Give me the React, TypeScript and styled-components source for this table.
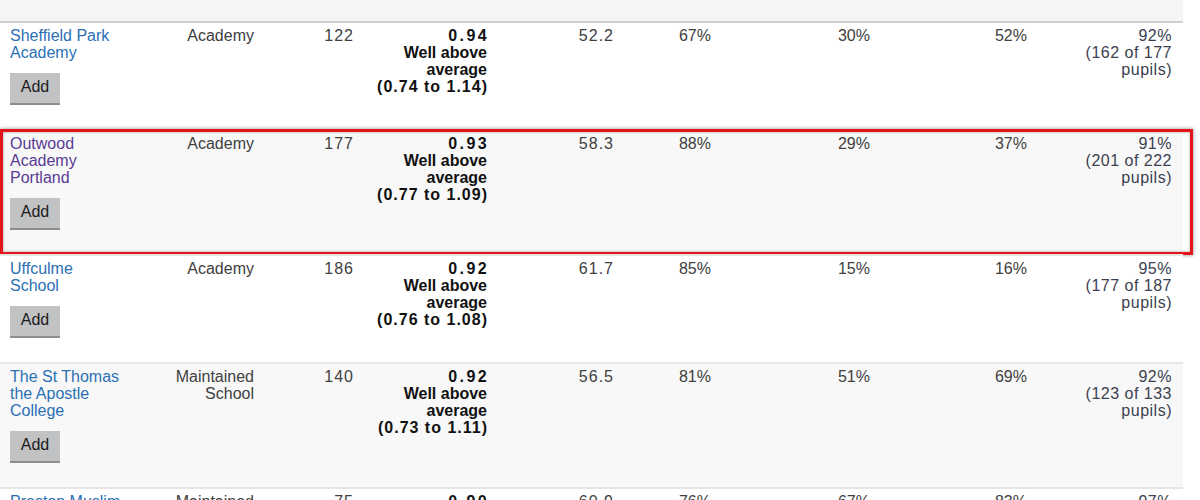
import styled, { createGlobalStyle } from 'styled-components';

type School = {
  name: string;
  visited?: boolean;
  type: string[];
  pupils: string;
  score: string;
  band: string[];
  range: string;
  att8: string;
  col6: string;
  col7: string;
  col8: string;
  pct: string;
  ofPupils: string;
  highlight?: boolean;
};

const schools: School[] = [
  {
    name: 'Sheffield Park Academy',
    type: ['Academy'],
    pupils: '122',
    score: '0.94',
    band: ['Well above', 'average'],
    range: '(0.74 to 1.14)',
    att8: '52.2',
    col6: '67%',
    col7: '30%',
    col8: '52%',
    pct: '92%',
    ofPupils: '162 of 177',
  },
  {
    name: 'Outwood Academy Portland',
    visited: true,
    type: ['Academy'],
    pupils: '177',
    score: '0.93',
    band: ['Well above', 'average'],
    range: '(0.77 to 1.09)',
    att8: '58.3',
    col6: '88%',
    col7: '29%',
    col8: '37%',
    pct: '91%',
    ofPupils: '201 of 222',
    highlight: true,
  },
  {
    name: 'Uffculme School',
    type: ['Academy'],
    pupils: '186',
    score: '0.92',
    band: ['Well above', 'average'],
    range: '(0.76 to 1.08)',
    att8: '61.7',
    col6: '85%',
    col7: '15%',
    col8: '16%',
    pct: '95%',
    ofPupils: '177 of 187',
  },
  {
    name: 'The St Thomas the Apostle College',
    type: ['Maintained', 'School'],
    pupils: '140',
    score: '0.92',
    band: ['Well above', 'average'],
    range: '(0.73 to 1.11)',
    att8: '56.5',
    col6: '81%',
    col7: '51%',
    col8: '69%',
    pct: '92%',
    ofPupils: '123 of 133',
  },
  {
    name: 'Preston Muslim Girls High School',
    type: ['Maintained', 'School'],
    pupils: '75',
    score: '0.90',
    band: ['Well above', 'average'],
    range: '(0.70 to 1.10)',
    att8: '60.9',
    col6: '76%',
    col7: '67%',
    col8: '83%',
    pct: '97%',
    ofPupils: '73 of 75',
  },
];

function App() {
  return (
    <>
      <GlobalStyle />
      <Table>
        <HeadStrip />
        {schools.map((s, i) => (
          <Row key={s.name} $alt={i % 2 === 1} $highlight={s.highlight}>
            <NameCell>
              <SchoolLink href='#' $visited={s.visited}>
                {s.name}
              </SchoolLink>
              <AddButton>Add</AddButton>
            </NameCell>
            <Cell>
              {s.type.map((t) => (
                <div key={t}>{t}</div>
              ))}
            </Cell>
            <Cell $num>{s.pupils}</Cell>
            <ScoreCell>
              <Score>{s.score}</Score>
              {s.band.map((b) => (
                <div key={b}>{b}</div>
              ))}
              <Range>{s.range}</Range>
            </ScoreCell>
            <Cell $num>{s.att8}</Cell>
            <Cell>{s.col6}</Cell>
            <Cell>{s.col7}</Cell>
            <Cell>{s.col8}</Cell>
            <PupilsCell>
              <div>{s.pct}</div>
              <div>({s.ofPupils}</div>
              <div>pupils)</div>
            </PupilsCell>
          </Row>
        ))}
      </Table>
    </>
  );
}
export default App;

const GlobalStyle = createGlobalStyle`
  body {
    margin: 0;
    background: #ffffff;
    font-family: 'Liberation Sans', Arial, sans-serif;
    overflow: hidden;
  }
`;

const Table = styled.div`
  width: 1183px;
  display: flex;
  flex-direction: column;
`;

const HeadStrip = styled.div`
  flex: none;
  height: 21px;
  background: #f5f5f5;
  border-bottom: 2px solid #cfcfcf;
`;

const Row = styled.div<{ $alt?: boolean; $highlight?: boolean }>`
  position: relative;
  flex: none;
  display: grid;
  grid-template-columns: 130px 124px 100px 133px 127px 97px 159px 157px 145px;
  padding: 4px 11px 24px 0;
  background: ${(p) => (p.$alt ? '#f8f8f8' : '#ffffff')};
  border-top: 2px solid #e6e6e6;
  &:nth-of-type(2) {
    border-top: none;
  }
  ${(p) =>
    p.$highlight &&
    `
    &::after {
      content: '';
      position: absolute;
      left: 0;
      right: -10px;
      top: -2px;
      bottom: -1px;
      border: 3px solid #e3151a;
      box-shadow: 0 0 4px rgba(0, 0, 0, 0.45), inset 0 0 3px rgba(0, 0, 0, 0.35);
      pointer-events: none;
    }
  `}
`;

const Cell = styled.div<{ $num?: boolean }>`
  font-size: 16px;
  line-height: 17px;
  color: #404040;
  text-align: right;
  white-space: nowrap;
  letter-spacing: ${(p) => (p.$num ? '1px' : '0')};
`;

const PupilsCell = styled(Cell)`
  letter-spacing: 0.5px;
  color: #3b4150;
`;

const NameCell = styled.div`
  padding-left: 10px;
  padding-right: 6px;
  display: flex;
  flex-direction: column;
  align-items: flex-start;
  font-size: 16px;
  line-height: 17px;
`;

const SchoolLink = styled.a<{ $visited?: boolean }>`
  color: ${(p) => (p.$visited ? '#5a3b95' : '#2b70b4')};
  text-decoration: none;
`;

const ScoreCell = styled(Cell)`
  font-weight: 700;
  color: #111111;
`;

const Score = styled.div`
  letter-spacing: 2.4px;
  margin-right: -2px;
`;

const Range = styled.div`
  letter-spacing: 1px;
  margin-right: -1px;
`;

const AddButton = styled.button`
  margin-top: 12px;
  width: 50px;
  height: 32px;
  padding: 0 0 2px;
  border: none;
  border-bottom: 2px solid #8e8e8e;
  background: #c1c2c4;
  font-family: 'Liberation Sans', Arial, sans-serif;
  font-size: 16px;
  color: #1b1b1b;
  cursor: pointer;
`;
